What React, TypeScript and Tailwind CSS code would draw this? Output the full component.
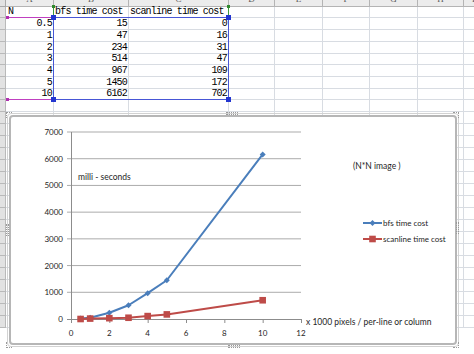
import React from "react";

const colW = ["w-[48px]", "w-[75px]", "w-[100px]", "w-[46px]", "w-[48px]", "w-[47px]", "w-[48px]", "w-[46px]", "w-[20px]"];
const colLetters = ["A", "B", "C", "D", "E", "F", "G", "H", "I"];
const rowH = [
  "h-[11px]", "h-[12px]", "h-[12px]", "h-[12px]", "h-[11px]", "h-[12px]", "h-[12px]", "h-[11px]", "h-[12px]",
  "h-[12px]", "h-[12px]", "h-[12px]", "h-[12px]", "h-[12px]", "h-[12px]", "h-[12px]", "h-[12px]", "h-[12px]",
  "h-[12px]", "h-[12px]", "h-[12px]", "h-[12px]", "h-[12px]", "h-[12px]", "h-[12px]", "h-[12px]", "h-[12px]",
];

const data: string[][] = [
  ["N", "bfs time cost", "scanline time cost"],
  ["0.5", "15", "0"],
  ["1", "47", "16"],
  ["2", "234", "31"],
  ["3", "514", "47"],
  ["4", "967", "109"],
  ["5", "1450", "172"],
  ["10", "6162", "702"],
];

const xs = [0.5, 1, 2, 3, 4, 5, 10];
const bfs = [15, 47, 234, 514, 967, 1450, 6162];
const scan = [0, 16, 31, 47, 109, 172, 702];
const px = (x: number) => 71 + x * (230 / 12);
const py = (v: number) => 319 - v * (187 / 7000);

function Chart() {
  const blue = "#4a7ebb";
  const red = "#be4b48";
  const grid = [1000, 2000, 3000, 4000, 5000, 6000, 7000];
  return (
    <svg className="absolute left-0 top-0" width={450} height={232} viewBox="8 114 450 232">
      <g fontFamily="Lato, 'Liberation Sans', sans-serif" fontSize={8} fill="#1e1e1e">
        {grid.map((v) => (
          <line key={v} x1={67} x2={301} y1={py(v)} y2={py(v)} stroke="#ababab" strokeWidth={1} />
        ))}
        <line x1={67} x2={301} y1={319.5} y2={319.5} stroke="#8c8c8c" strokeWidth={1} />
        <line x1={71.5} x2={71.5} y1={py(7000)} y2={323} stroke="#8c8c8c" strokeWidth={1} />
        {[0, 2, 4, 6, 8, 10, 12].map((k) => (
          <line key={k} x1={px(k) + 0.5} x2={px(k) + 0.5} y1={319} y2={323} stroke="#8c8c8c" strokeWidth={1} />
        ))}
        {[0, 1000, 2000, 3000, 4000, 5000, 6000, 7000].map((v) => (
          <text key={v} x={63} y={py(v) + 3} textAnchor="end">
            {v}
          </text>
        ))}
        {[0, 2, 4, 6, 8, 10, 12].map((k) => (
          <text key={k} x={px(k)} y={336} textAnchor="middle">
            {k}
          </text>
        ))}
        <polyline
          points={xs.map((x, i) => `${px(x)},${py(bfs[i])}`).join(" ")}
          fill="none"
          stroke={blue}
          strokeWidth={2}
          strokeLinejoin="round"
        />
        <polyline
          points={xs.map((x, i) => `${px(x)},${py(scan[i])}`).join(" ")}
          fill="none"
          stroke={red}
          strokeWidth={2}
          strokeLinejoin="round"
        />
        {xs.map((x, i) => (
          <polygon
            key={"b" + i}
            points={`${px(x)},${py(bfs[i]) - 3} ${px(x) + 3},${py(bfs[i])} ${px(x)},${py(bfs[i]) + 3} ${px(x) - 3},${py(bfs[i])}`}
            fill={blue}
          />
        ))}
        {xs.map((x, i) => (
          <rect key={"s" + i} x={px(x) - 3.3} y={py(scan[i]) - 3.3} width={6.6} height={6.6} fill={red} />
        ))}
        <text x={78} y={180} fontSize={8.5}>
          milli - seconds
        </text>
        <text x={353} y={169} fontSize={8.5}>
          (N*N image )
        </text>
        <line x1={363} x2={382} y1={223} y2={223} stroke={blue} strokeWidth={2} />
        <polygon points="372.5,220 375.5,223 372.5,226 369.5,223" fill={blue} />
        <text x={383} y={226} fontSize={8}>
          bfs time  cost
        </text>
        <line x1={363} x2={382} y1={239} y2={239} stroke={red} strokeWidth={2} />
        <rect x={369.2} y={235.7} width={6.6} height={6.6} fill={red} />
        <text x={383} y={242} fontSize={8}>
          scanline time  cost
        </text>
        <text x={306} y={325} fontSize={8.5}>
          x 1000 pixels / per-line or column
        </text>
      </g>
    </svg>
  );
}

export default function App() {
  return (
    <div className="relative w-[474px] h-[354px] overflow-hidden bg-white">
      {/* spreadsheet grid */}
      <div className="flex flex-col" style={{ fontFamily: "'Liberation Mono', 'DejaVu Sans Mono', monospace" }}>
        {/* column header */}
        <div className="flex h-[7px] shrink-0">
          <div className="w-[6px] shrink-0 bg-[#e2e2e2] border-r border-b border-[#a9a9a9]" />
          {colW.map((w, i) => (
            <div
              key={i}
              className={`${w} shrink-0 bg-[#ececec] border-r border-b border-[#b4b4b4] flex justify-center overflow-hidden`}
            >
              <span className="text-[9px] leading-[9px] -mt-[5px] text-[#555]" style={{ fontFamily: "'Liberation Serif', serif" }}>
                {colLetters[i]}
              </span>
            </div>
          ))}
        </div>
        {rowH.map((h, r) => (
          <div key={r} className={`flex ${h} shrink-0`}>
            <div className="w-[6px] shrink-0 bg-[#e2e2e2] border-r border-b border-[#b9b9b9]" />
            {colW.map((w, c) => {
              const txt = data[r]?.[c];
              const left = r === 0;
              return (
                <div
                  key={c}
                  className={`${w} shrink-0 border-r border-b border-[#d8dce2] flex items-end overflow-visible whitespace-nowrap ${
                    left ? "justify-start" : "justify-end pr-[1px]"
                  } ${left && c === 0 ? "pl-[2px]" : left ? "pl-[1px]" : ""}`}
                >
                  {txt !== undefined && (
                    <span className="text-[10px] leading-[10px] tracking-[-0.8px] text-black">{txt}</span>
                  )}
                </div>
              );
            })}
          </div>
        ))}
      </div>

      {/* chart data selection highlights */}
      <div className="absolute left-[6px] top-[17px] w-[47px] h-[1px] bg-[#c040c0]" />
      <div className="absolute left-[6px] top-[99px] w-[47px] h-[1px] bg-[#c040c0]" />
      <div className="absolute left-[6px] top-[16px] w-[3px] h-[3px] bg-[#b030b0]" />
      <div className="absolute left-[6px] top-[98px] w-[3px] h-[3px] bg-[#b030b0]" />
      <div className="absolute left-[53px] top-[6px] w-[1px] h-[11px] bg-[#3c9a3c]" />
      <div className="absolute left-[228px] top-[6px] w-[1px] h-[11px] bg-[#3c9a3c]" />
      <div className="absolute left-[52px] top-[5px] w-[3px] h-[3px] bg-[#2f8a2f]" />
      <div className="absolute left-[227px] top-[5px] w-[3px] h-[3px] bg-[#2f8a2f]" />
      <div className="absolute left-[53px] top-[17px] w-[176px] h-[83px] border border-[#4856d6]" />
      <div className="absolute left-[51px] top-[15px] w-[5px] h-[5px] bg-[#2336d0]" />
      <div className="absolute left-[226px] top-[15px] w-[5px] h-[5px] bg-[#2336d0]" />
      <div className="absolute left-[51px] top-[97px] w-[5px] h-[5px] bg-[#2336d0]" />
      <div className="absolute left-[226px] top-[97px] w-[5px] h-[5px] bg-[#2336d0]" />

      {/* chart object */}
      <div className="absolute left-[7px] top-[113px] w-[452px] h-[234px] border border-[#d2d2d2] rounded-[4px]">
        <div className="m-[1px] h-[230px] border-2 border-[#b6b6b6] rounded-[4px] bg-white" />
        <Chart />
      </div>
      {/* selection handles of chart */}
      <div className="absolute left-[226px] top-[112px] w-[12px] h-[3px] border-y border-dotted border-[#9a9a9a]" />
      <div className="absolute left-[228px] top-[345px] w-[12px] h-[3px] border-y border-dotted border-[#9a9a9a]" />
      <div className="absolute left-[456px] top-[222px] w-[3px] h-[12px] border-x border-dotted border-[#9a9a9a]" />
      <div className="absolute left-[6px] top-[224px] w-[3px] h-[12px] border-x border-dotted border-[#9a9a9a]" />
      <div className="absolute left-[6px] top-[112px] w-[6px] h-[6px] border-l border-t border-dotted border-[#9a9a9a]" />
      <div className="absolute left-[453px] top-[112px] w-[6px] h-[6px] border-r border-t border-dotted border-[#9a9a9a]" />
      <div className="absolute left-[6px] top-[342px] w-[6px] h-[6px] border-l border-b border-dotted border-[#9a9a9a]" />
      <div className="absolute left-[453px] top-[342px] w-[6px] h-[6px] border-r border-b border-dotted border-[#9a9a9a]" />
    </div>
  );
}
